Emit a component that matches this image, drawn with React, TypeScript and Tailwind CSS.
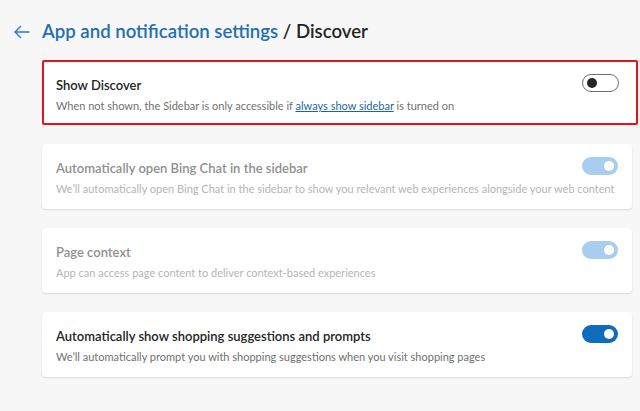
import React from "react";

function Toggle({ state }: { state: "off" | "on" | "disabled" }) {
  if (state === "off") {
    return (
      <div className="w-[37px] h-[18px] rounded-full border border-[#6e6e6e] bg-white flex items-center pl-[4px] shrink-0">
        <div className="w-[10px] h-[10px] rounded-full bg-[#262626]" />
      </div>
    );
  }
  const bg = state === "on" ? "bg-[#0f6cbd]" : "bg-[#a9cdef]";
  return (
    <div className={`w-[36px] h-[18px] rounded-full ${bg} flex items-center justify-end pr-[4px] shrink-0`}>
      <div className="w-[10px] h-[10px] rounded-full bg-white" />
    </div>
  );
}

function Card({
  title,
  desc,
  state,
  disabled,
  highlight,
}: {
  title: string;
  desc: React.ReactNode;
  state: "off" | "on" | "disabled";
  disabled?: boolean;
  highlight?: boolean;
}) {
  return (
    <div
      className={
        highlight
          ? "w-[596px] h-[65px] bg-white border-2 border-[#e3121b] rounded-[2px] pl-[12px] pr-[17px] pt-[12px] flex flex-col"
          : "w-[590px] h-[65px] bg-white rounded-[4px] shadow-[0_1px_2px_rgba(0,0,0,0.12)] pl-[14px] pr-[14px] pt-[13px] flex flex-col"
      }
    >
      <div className="flex items-start justify-between">
        <div
          className={`mt-[2px] text-[13px] font-semibold leading-[18px] ${disabled ? "text-[#8f8f8f]" : "text-[#242424]"}`}
        >
          {title}
        </div>
        <Toggle state={state} />
      </div>
      <div
        className={`whitespace-nowrap text-[11px] leading-[16px] mt-[4px] ${disabled ? "text-[#b5b5b5]" : "text-[#707070]"}`}
      >
        {desc}
      </div>
    </div>
  );
}

export default function App() {
  return (
    <div
      className="w-[640px] h-[411px] bg-[#f7f7f7] overflow-hidden"
      style={{ fontFamily: 'Lato, "Noto Sans", sans-serif' }}
    >
      <div className="flex items-center pl-[14px] pt-[19px] h-[44px]">
        <svg width="16" height="14" viewBox="0 0 16 14" fill="none" className="mr-[12px]">
          <path d="M7 1 L1 7 L7 13 M1 7 H15.5" stroke="#2b7cc7" strokeWidth="1.3" />
        </svg>
        <div className="text-[18.6px] font-semibold leading-none">
          <span className="text-[#1f6fb5]">App and notification settings</span>
          <span className="text-[#242424]"> / Discover</span>
        </div>
      </div>
      <div className="pl-[42px] pt-[16px] flex flex-col gap-[19px]">
        <Card
          highlight
          title="Show Discover"
          state="off"
          desc={
            <>
              When not shown, the Sidebar is only accessible if{" "}
              <span className="text-[#1a65a8] underline">always show sidebar</span> is turned on
            </>
          }
        />
        <Card
          disabled
          title="Automatically open Bing Chat in the sidebar"
          state="disabled"
          desc="We’ll automatically open Bing Chat in the sidebar to show you relevant web experiences alongside your web content"
        />
        <Card
          disabled
          title="Page context"
          state="disabled"
          desc="App can access page content to deliver context-based experiences"
        />
        <Card
          title="Automatically show shopping suggestions and prompts"
          state="on"
          desc="We’ll automatically prompt you with shopping suggestions when you visit shopping pages"
        />
      </div>
    </div>
  );
}
